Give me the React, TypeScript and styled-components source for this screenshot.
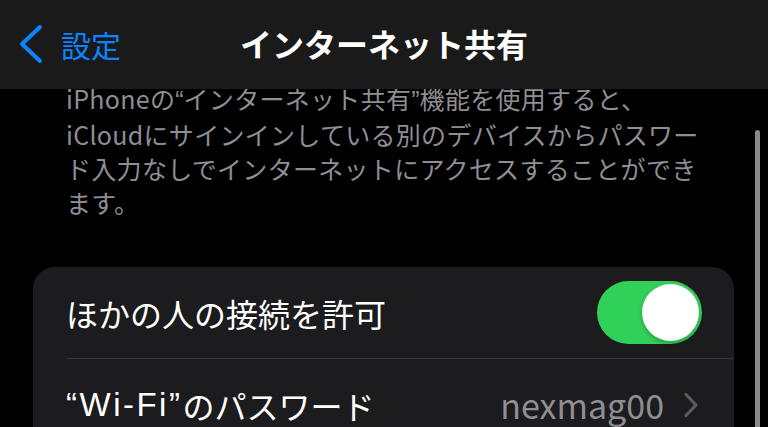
import React from "react";
import styled, { createGlobalStyle } from "styled-components";

const GlobalStyle = createGlobalStyle`
  html, body {
    margin: 0;
    padding: 0;
    background: #000;
    overflow: hidden;
  }
  body {
    font-family: "Noto Sans CJK JP", "Noto Sans", sans-serif;
    -webkit-font-smoothing: antialiased;
  }
`;

const Screen = styled.div`
  position: relative;
  width: 768px;
  height: 427px;
  background: #000;
  overflow: hidden;
  display: flex;
  flex-direction: column;
`;

const NavBar = styled.header`
  position: relative;
  z-index: 2;
  flex: none;
  height: 89px;
  background: #1a1a1a;
  display: grid;
  grid-template-columns: 1fr auto 1fr;
  align-items: center;
`;

const BackButton = styled.div`
  display: flex;
  align-items: center;
  gap: 17px;
  padding-left: 18px;
  color: #0a84ff;
  font-size: 30px;
  line-height: 1;
  padding-bottom: 2px;
`;

const Title = styled.h1`
  margin: 0;
  color: #fff;
  font-size: 32px;
  font-weight: 700;
  line-height: 1;
  padding-bottom: 4px;
`;

const Content = styled.main`
  position: relative;
  z-index: 1;
  display: flex;
  flex-direction: column;
  margin-top: -8px;
`;

const Description = styled.p`
  margin: 0;
  padding: 0 40px 0 66px;
  color: #8e8e93;
  font-size: 25px;
  line-height: 34px;
  letter-spacing: 0.3px;
  white-space: nowrap;
`;

const Latin = styled.span<{ $size?: number; $spacing?: number }>`
  font-family: "Liberation Sans", sans-serif;
  font-size: ${(p) => (p.$size ? `${p.$size}px` : "inherit")};
  letter-spacing: ${(p) => (p.$spacing ? `${p.$spacing}px` : "normal")};
`;

const Card = styled.section`
  margin: 48px 34px 0 33px;
  background: #1c1c1e;
  border-radius: 22px;
  display: flex;
  flex-direction: column;
  padding-left: 33px;
`;

const Row = styled.div<{ $divider?: boolean }>`
  height: 91px;
  display: flex;
  align-items: center;
  justify-content: space-between;
  padding-right: 32px;
  border-bottom: ${(p) => (p.$divider ? "1px solid #38383a" : "none")};
`;

const Label = styled.span`
  color: #fff;
  font-size: 32px;
  line-height: 1;
  display: flex;
  align-items: center;
`;

const Value = styled.span`
  display: flex;
  align-items: center;
  gap: 19px;
  color: #8e8e93;
  font-size: 34px;
  line-height: 1;
  padding-right: 3px;
`;

const Toggle = styled.div<{ $on: boolean }>`
  width: 105px;
  height: 63px;
  border-radius: 32px;
  background: ${(p) => (p.$on ? "#30d158" : "#39393d")};
  display: flex;
  align-items: center;
  justify-content: ${(p) => (p.$on ? "flex-end" : "flex-start")};
  padding: 0 3px;
  box-sizing: border-box;
`;

const Knob = styled.div`
  width: 57px;
  height: 57px;
  border-radius: 50%;
  background: #fff;
  box-shadow: 0 2px 4px rgba(0, 0, 0, 0.25);
`;

const ScrollIndicator = styled.div`
  position: absolute;
  z-index: 3;
  left: 755px;
  top: 130px;
  width: 5px;
  height: 320px;
  border-radius: 3px;
  background: #8a8a8a;
`;

const BackChevron = () => (
  <svg width="26" height="40" viewBox="0 0 26 40" fill="none">
    <path
      d="M22 3 L4 20 L22 37"
      stroke="#0a84ff"
      strokeWidth="4"
      strokeLinecap="round"
      strokeLinejoin="round"
    />
  </svg>
);

const RowChevron = () => (
  <svg width="16" height="26" viewBox="0 0 16 26" fill="none">
    <path
      d="M3 2.5 L13 13 L3 23.5"
      stroke="#5a5a5f"
      strokeWidth="3.2"
      strokeLinecap="round"
      strokeLinejoin="round"
    />
  </svg>
);

export default function App() {
  return (
    <>
      <GlobalStyle />
      <Screen>
        <NavBar>
          <BackButton>
            <BackChevron />
            <span>設定</span>
          </BackButton>
          <Title>インターネット共有</Title>
          <div />
        </NavBar>
        <Content>
          <Description>
            iPhoneの<Latin>“</Latin>インターネット共有<Latin>”</Latin>機能を使用すると、
            <br />
            iCloudにサインインしている別のデバイスからパスワー
            <br />
            ド入力なしでインターネットにアクセスすることができ
            <br />
            ます。
          </Description>
          <Card>
            <Row $divider>
              <Label>ほかの人の接続を許可</Label>
              <Toggle $on>
                <Knob />
              </Toggle>
            </Row>
            <Row>
              <Label>
                <Latin $size={33} $spacing={2.5}>“Wi-Fi”</Latin>
                のパスワード
              </Label>
              <Value>
                nexmag00
                <RowChevron />
              </Value>
            </Row>
          </Card>
        </Content>
        <ScrollIndicator />
      </Screen>
    </>
  );
}
